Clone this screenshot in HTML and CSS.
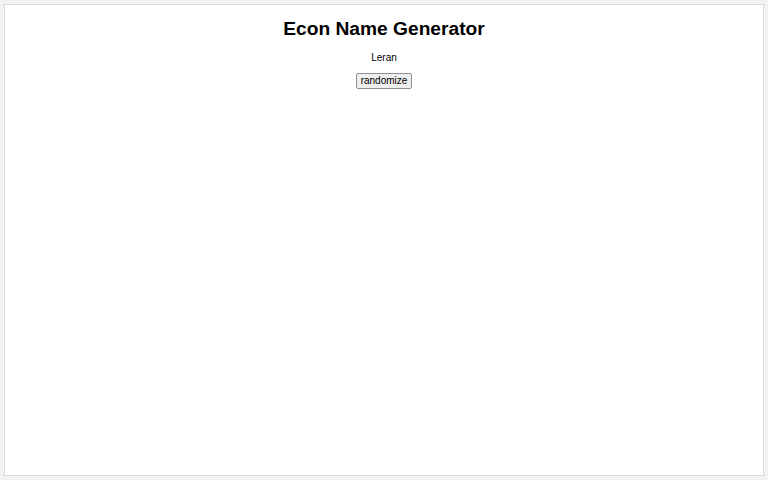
FILE: index.html
```html
<!DOCTYPE html>
<html>
<head>
<meta charset="utf-8">
<link rel="stylesheet" href="styles.css">
</head>
<body>
<div class="frame">
  <h1 class="title">Econ Name Generator</h1>
  <div class="name">Leran</div>
  <button class="btn">randomize</button>
</div>
</body>
</html>
```

FILE: styles.css
```css
html, body { margin: 0; padding: 0; }
body {
  background: #f2f2f2;
  font-family: "Liberation Sans", Arial, sans-serif;
  padding: 4px;
  box-sizing: border-box;
  height: 480px;
}
.frame {
  background: #fff;
  border: 1px solid #dcdcdc;
  box-sizing: border-box;
  width: 760px;
  height: 472px;
  display: flex;
  flex-direction: column;
  align-items: center;
}
.title {
  font-size: 19.2px;
  font-weight: bold;
  margin: 13px 0 0 0;
  line-height: 22px;
  color: #000;
}
.name {
  font-size: 10px;
  margin-top: 12px;
  line-height: 12px;
  color: #000;
}
.btn {
  margin-top: 9px;
  font-family: "Liberation Sans", Arial, sans-serif;
  font-size: 10px;
  padding: 1px 4px;
  border: 1px solid #8f8f8f;
  border-radius: 2px;
  background: #efefef;
  color: #000;
  line-height: 12px;
}
```
